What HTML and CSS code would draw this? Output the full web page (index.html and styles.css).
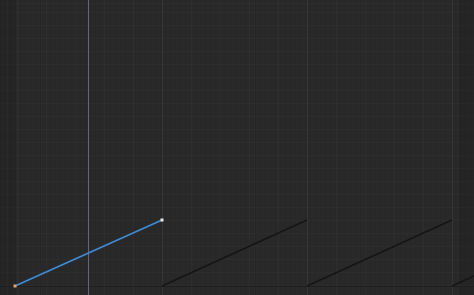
FILE: index.html
```html
<!DOCTYPE html>
<html lang="en">
<head>
    <meta charset="UTF-8">
    <title>Graph Editor</title>
    <link rel="stylesheet" href="styles.css">
</head>
<body>
    <div class="graph">
        <div class="side-left"></div>
        <div class="side-right"></div>
        <div class="frame-line" style="left: 162px"></div>
        <div class="frame-line" style="left: 307px"></div>
        <div class="frame-line" style="left: 452px"></div>
        <div class="baseline"></div>
        <div class="cursor"></div>
        <svg class="curves" width="474" height="295" viewBox="0 0 474 295">
            <line x1="162" y1="286" x2="307" y2="220" stroke="#151515" stroke-width="1.4"/>
            <line x1="307" y1="286" x2="452" y2="220" stroke="#151515" stroke-width="1.4"/>
            <line x1="452" y1="286" x2="597" y2="220" stroke="#151515" stroke-width="1.4"/>
            <line x1="15" y1="286" x2="162" y2="220" stroke="#3f8ad6" stroke-width="1.8"/>
            <rect x="13.5" y="284.5" width="3" height="3" fill="#e8a070"/>
            <rect x="160.5" y="218.5" width="3" height="3" fill="#f0e6d8"/>
        </svg>
    </div>
</body>
</html>
```

FILE: styles.css
```css
body {
    margin: 0;
    padding: 0;
    background-color: #282828;
    overflow: hidden;
}
.graph {
    position: relative;
    width: 474px;
    height: 295px;
    overflow: hidden;
    background-color: #292929;
    background-image:
        repeating-linear-gradient(to right, rgba(255,255,255,0.025) 0 1px, transparent 1px 29px),
        repeating-linear-gradient(to bottom, rgba(255,255,255,0.018) 0 1px, transparent 1px 13px),
        repeating-linear-gradient(to right, rgba(0,0,0,0.05) 0 1px, transparent 1px 5px);
    background-position: 17px 0, 0 12px, 0 0;
}
.side-left {
    position: absolute;
    left: 0;
    top: 0;
    width: 16px;
    height: 100%;
    background-color: rgba(0,0,0,0.09);
}
.side-right {
    position: absolute;
    right: 0;
    top: 0;
    width: 15px;
    height: 100%;
    background-color: rgba(0,0,0,0.09);
}
.frame-line {
    position: absolute;
    top: 0;
    width: 1px;
    height: 100%;
    background-color: #353535;
}
.baseline {
    position: absolute;
    left: 0;
    top: 286px;
    width: 100%;
    height: 1px;
    background-color: #1e1e1e;
}
.cursor {
    position: absolute;
    left: 88px;
    top: 0;
    width: 1px;
    height: 100%;
    background-color: #646482;
}
.curves {
    position: absolute;
    left: 0;
    top: 0;
}
```
